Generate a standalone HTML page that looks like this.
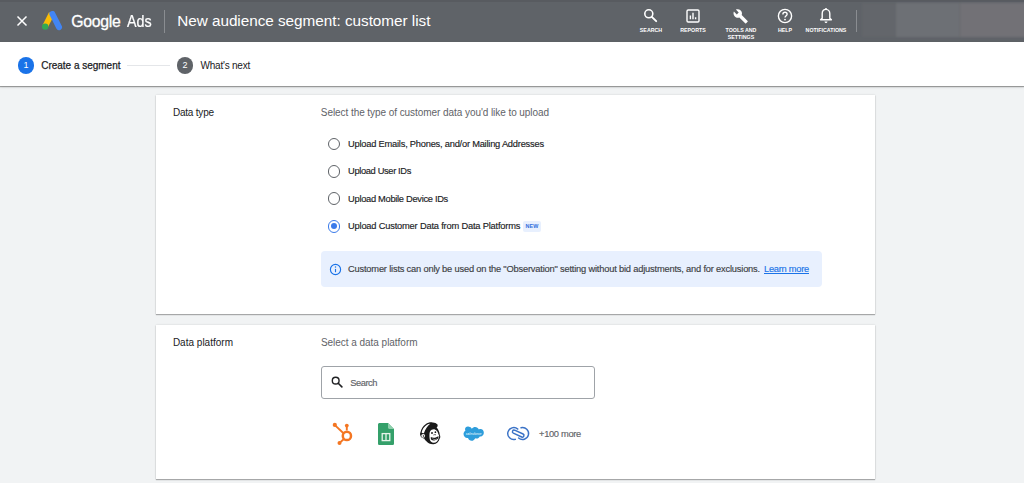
<!DOCTYPE html>
<html lang="en">
<head>
<meta charset="utf-8">
<title>New audience segment: customer list</title>
<style>
html,body{margin:0;padding:0;}
body{width:1024px;height:483px;overflow:hidden;background:#f1f3f4;position:relative;font-family:"Liberation Sans",sans-serif;color:#202124;}
.abs{position:absolute;white-space:nowrap;}
#hdr{position:absolute;left:0;top:0;width:1024px;height:42.4px;background:#5f6368;}
#hdr .topline{position:absolute;left:0;top:0;width:1024px;height:1.6px;background:#585b60;}
#step{position:absolute;left:0;top:42.4px;width:1024px;height:43.8px;background:#fff;box-shadow:0 1px 1px rgba(0,0,0,.32),0 1px 3px rgba(0,0,0,.12);}
.card{position:absolute;left:156px;width:717.5px;border-left:1px solid #fff;background:#fff;box-shadow:0 1px 1px rgba(0,0,0,.28),0 0 2px rgba(0,0,0,.14);}
.t11{font-size:11px;line-height:14px;}
.lbl{font-size:9.3px;line-height:12px;color:#202124;-webkit-text-stroke:0.15px currentColor;}
.nav{font-size:5.3px;line-height:7px;color:#fff;text-align:center;font-weight:bold;letter-spacing:0;}
.radio{position:absolute;width:10.6px;height:10.6px;border:1.5px solid #5f6368;border-radius:50%;background:#fff;}
</style>
</head>
<body>

<div id="hdr">
  <div class="topline"></div>
  <!-- close X -->
  <svg class="abs" style="left:16px;top:15px" width="12" height="12" viewBox="0 0 12 12"><path d="M1.5 1.5 L10.5 10.5 M10.5 1.5 L1.5 10.5" stroke="#fff" stroke-width="1.5" fill="none"/></svg>
  <!-- Google Ads logo -->
  <svg class="abs" style="left:41px;top:10.6px" width="23" height="21" viewBox="0 0 23 21">
    <path d="M10.6 2.6 L4.2 15.3" stroke="#fbbc04" stroke-width="5.8" stroke-linecap="butt" fill="none"/>
    <path d="M11.4 3 L18 16.2" stroke="#4285f4" stroke-width="6" stroke-linecap="round" fill="none"/>
    <circle cx="4.2" cy="15.6" r="3.2" fill="#34a853"/>
  </svg>
  <div id="tG" class="abs" style="left:71.3px;top:11px;font-size:15.8px;line-height:22px;color:#fff;-webkit-text-stroke:0.3px #fff;letter-spacing:-0.292px;">Google</div>
  <div id="tA" class="abs" style="left:126.6px;top:10px;font-size:16.2px;line-height:22px;color:#fff;transform:scaleX(0.885);transform-origin:0 0;-webkit-text-stroke:0.2px #fff;">Ads</div>
  <div class="abs" style="left:164px;top:10px;width:1px;height:23px;background:#8a8d91;"></div>
  <div id="tT" class="abs" style="left:177.2px;top:10px;font-size:15.3px;line-height:22px;color:#fff;letter-spacing:-0.029px;">New audience segment: customer list</div>

  <!-- nav icons -->
  <svg class="abs" style="left:643px;top:8px" width="15" height="15" viewBox="0 0 15 15"><circle cx="5.8" cy="5.8" r="4" stroke="#fff" stroke-width="1.6" fill="none"/><path d="M8.8 8.8 L13.2 13.2" stroke="#fff" stroke-width="1.9" stroke-linecap="round"/></svg>
  <div class="abs nav" style="left:630px;top:27px;width:42px;">SEARCH</div>

  <svg class="abs" style="left:686px;top:9px" width="14" height="14" viewBox="0 0 14 14"><rect x="1" y="1" width="12" height="12" rx="1.2" stroke="#fff" stroke-width="1.4" fill="none"/><path d="M4.4 10.2 V6.6 M7 10.2 V3.8 M9.6 10.2 V8.2" stroke="#fff" stroke-width="1.4"/></svg>
  <div class="abs nav" style="left:672px;top:27px;width:42px;">REPORTS</div>

  <svg class="abs" style="left:733px;top:8px" width="16" height="16" viewBox="0 0 16 16"><path d="M14.6 12.9 L8.7 7 C9.3 5.5 9 3.7 7.7 2.5 C6.4 1.2 4.5 0.9 2.9 1.6 L5.7 4.4 L3.8 6.4 L0.9 3.6 C0.1 5.2 0.5 7.1 1.8 8.4 C3 9.7 4.8 10 6.3 9.4 L12.2 15.3 C12.5 15.6 12.9 15.6 13.1 15.3 L14.6 13.8 C14.9 13.6 14.9 13.1 14.6 12.9 Z" fill="#fff"/></svg>
  <div class="abs nav" style="left:716px;top:27px;width:50px;">TOOLS AND<br>SETTINGS</div>

  <svg class="abs" style="left:777px;top:8px" width="16" height="16" viewBox="0 0 16 16"><circle cx="8" cy="8" r="6.6" stroke="#fff" stroke-width="1.4" fill="none"/><path d="M5.9 6.4 C5.9 5.1 6.8 4.3 8 4.3 C9.2 4.3 10.1 5.1 10.1 6.2 C10.1 7.6 8 7.8 8 9.5" stroke="#fff" stroke-width="1.4" fill="none"/><circle cx="8" cy="11.6" r="0.9" fill="#fff"/></svg>
  <div class="abs nav" style="left:764px;top:27px;width:42px;">HELP</div>

  <svg class="abs" style="left:818px;top:7px" width="16" height="17" viewBox="0 0 16 17"><path d="M8 2.4 C5.6 2.4 4.2 4.3 4.2 6.8 V11.2 L2.6 12.8 H13.4 L11.8 11.2 V6.8 C11.8 4.3 10.4 2.4 8 2.4 Z" stroke="#fff" stroke-width="1.4" fill="none" stroke-linejoin="round"/><circle cx="8" cy="1.9" r="1" fill="#fff"/><path d="M6.5 14.4 H9.5 C9.5 15.3 8.8 15.9 8 15.9 C7.2 15.9 6.5 15.3 6.5 14.4 Z" fill="#fff"/></svg>
  <div class="abs nav" style="left:796px;top:27px;width:60px;">NOTIFICATIONS</div>

  <div class="abs" style="left:856px;top:10px;width:1px;height:22px;background:#8a8d91;"></div>
  <!-- blurred account area -->
  <div class="abs" style="left:862px;top:3px;width:170px;height:34px;background:#63666b;filter:blur(0.8px);"></div>
  <div class="abs" style="left:896px;top:3px;width:64px;height:34px;background:#6d7075;filter:blur(0.8px);"></div>
  <div class="abs" style="left:960px;top:3px;width:72px;height:34px;background:#727176;filter:blur(0.8px);"></div>
</div>

<div id="step">
  <div class="abs" style="left:17.8px;top:14.6px;width:16.6px;height:16.6px;border-radius:50%;background:#1a73e8;color:#fff;font-size:9px;line-height:16.6px;text-align:center;">1</div>
  <div id="tS1" class="abs t11" style="left:41.2px;top:17px;color:#202124;font-size:10px;-webkit-text-stroke:0.25px #202124;letter-spacing:-0.013px;">Create a segment</div>
  <div class="abs" style="left:127px;top:22.4px;width:43px;height:1px;background:#e4e6e9;"></div>
  <div class="abs" style="left:176.8px;top:14.6px;width:16.6px;height:16.6px;border-radius:50%;background:#5f6368;color:#fff;font-size:9px;line-height:16.6px;text-align:center;">2</div>
  <div id="tS2" class="abs t11" style="left:200.5px;top:17px;color:#202124;font-size:10px;letter-spacing:-0.222px;">What's next</div>
</div>

<!-- Card 1 -->
<div class="card" style="top:95px;height:219px;">
  <div id="tL1" class="abs t11" style="left:15.9px;top:11px;color:#202124;font-size:10px;letter-spacing:-0.201px;">Data type</div>
  <div id="tD1" class="abs t11" style="left:163.8px;top:11px;color:#5f6368;font-size:10px;letter-spacing:-0.062px;">Select the type of customer data you'd like to upload</div>

  <div class="radio" style="left:170.8px;top:42.9px;"></div>
  <div id="tR1" class="abs lbl" style="left:191.1px;top:43px;letter-spacing:-0.223px;">Upload Emails, Phones, and/or Mailing Addresses</div>
  <div class="radio" style="left:170.8px;top:70.3px;"></div>
  <div id="tR2" class="abs lbl" style="left:191.1px;top:70px;letter-spacing:-0.354px;">Upload User IDs</div>
  <div class="radio" style="left:170.8px;top:97.4px;"></div>
  <div id="tR3" class="abs lbl" style="left:191.1px;top:98px;letter-spacing:-0.295px;">Upload Mobile Device IDs</div>
  <div class="radio" style="left:170.8px;top:125px;border-color:#3b7bea;"><div style="position:absolute;left:2.1px;top:2.1px;width:6.4px;height:6.4px;border-radius:50%;background:#3b7bea;"></div></div>
  <div id="tR4" class="abs lbl" style="left:191.0px;top:125px;letter-spacing:-0.190px;">Upload Customer Data from Data Platforms</div>
  <div class="abs" style="left:365.7px;top:126.4px;width:18.8px;height:10.9px;background:#e8f0fe;border-radius:2px;color:#2f6fdc;font-size:5.4px;line-height:10.9px;text-align:center;font-weight:bold;letter-spacing:.2px;">NEW</div>

  <div class="abs" style="left:163.6px;top:156.3px;width:501.6px;height:35.7px;background:#e8f0fe;border-radius:4px;"></div>
  <svg class="abs" style="left:171.8px;top:167.7px" width="13" height="13" viewBox="0 0 13 13"><circle cx="6.5" cy="6.5" r="5.1" stroke="#1a73e8" stroke-width="1.15" fill="none"/><path d="M6.5 5.9 V9.2" stroke="#1a73e8" stroke-width="1.15"/><circle cx="6.5" cy="4.1" r="0.75" fill="#1a73e8"/></svg>
  <div id="tI" class="abs lbl" style="left:191.0px;top:168px;color:#3c4043;letter-spacing:-0.190px;">Customer lists can only be used on the "Observation" setting without bid adjustments, and for exclusions.</div>
  <div id="tLM" class="abs lbl" style="left:607.0px;top:168px;color:#1a73e8;text-decoration:underline;letter-spacing:-0.255px;">Learn more</div>
</div>

<!-- Card 2 -->
<div class="card" style="top:325px;height:154px;">
  <div id="tL2" class="abs t11" style="left:15.9px;top:11px;color:#202124;font-size:10px;letter-spacing:0.005px;">Data platform</div>
  <div id="tD2" class="abs t11" style="left:163.9px;top:11px;color:#5f6368;font-size:10px;letter-spacing:-0.031px;">Select a data platform</div>

  <div class="abs" style="left:163.5px;top:41px;width:272.5px;height:31.4px;border:1px solid #9fa3a8;border-radius:3px;background:#fff;"></div>
  <svg class="abs" style="left:174.4px;top:51.4px" width="12.2" height="12.2" viewBox="0 0 13 13"><circle cx="5" cy="5" r="3.6" stroke="#202124" stroke-width="1.5" fill="none"/><path d="M7.7 7.7 L11.6 11.6" stroke="#202124" stroke-width="1.7" stroke-linecap="round"/></svg>
  <div id="tSe" class="abs lbl" style="left:193.2px;top:52px;color:#5f6368;letter-spacing:-0.428px;">Search</div>

  <!-- HubSpot -->
  <svg class="abs" style="left:174px;top:96px" width="24" height="26" viewBox="0 0 24 26">
    <circle cx="15.9" cy="14.9" r="4.1" stroke="#f47622" stroke-width="2.5" fill="none"/>
    <path d="M15.8 9.4 V5" stroke="#f47622" stroke-width="1.9"/>
    <circle cx="15.8" cy="4.6" r="1.9" fill="#f47622"/>
    <path d="M12.2 12 L4.4 4.6" stroke="#f47622" stroke-width="1.9"/>
    <circle cx="3.8" cy="3.9" r="2.1" fill="#f47622"/>
    <path d="M12.6 18.2 L9 21.6" stroke="#f47622" stroke-width="1.9"/>
    <circle cx="8.5" cy="22" r="2" fill="#f47622"/>
  </svg>
  <!-- Sheets -->
  <svg class="abs" style="left:220px;top:97px" width="18" height="24" viewBox="0 0 18 24">
    <path d="M2 1 H11 L17 7 V21.4 C17 22.3 16.3 23 15.4 23 H2.6 C1.7 23 1 22.3 1 21.4 V2.6 C1 1.7 1.7 1 2.6 1 Z" fill="#34a06a"/>
    <path d="M11 1 L17 7 H12.4 C11.6 7 11 6.4 11 5.6 Z" fill="#8fd0ad"/>
    <rect x="5.2" y="11.6" width="7.6" height="7" fill="none" stroke="#e6f4ea" stroke-width="1.3"/>
    <path d="M9 11.6 V18.6" stroke="#e6f4ea" stroke-width="1.3"/>
  </svg>
  <!-- Mailchimp -->
  <svg class="abs" style="left:261px;top:96px" width="25" height="25" viewBox="0 0 25 25">
    <path d="M2.4 14.6 C1.9 13.4 2 12.2 2.5 11.2 C3 8 5 5 7.6 3.2 C9.6 1.8 12 1.2 14.4 1.4 C16.4 1.3 18.4 2 19.5 3.4 C20 4.6 19.4 5.8 18.6 6.6 C20.4 8.6 21.6 11.2 21.8 14 C22.6 15.2 22.4 16.8 21.6 17.8 C21 20.8 18.6 23 15.6 23.2 C12.6 23.4 10 22.2 8.4 20.2 C7.4 19.4 6.6 18.4 6.2 17.4 C4.4 17.6 2.8 16.4 2.4 14.6 Z" fill="#1a1a1a"/>
    <path d="M3.6 11.6 C4.2 8.4 6.4 5.4 9 3.8 C10 3.2 11.2 2.8 12.2 2.8 C9.6 4.8 7.2 8.2 6 12 C5.2 12.4 4.2 12.2 3.6 11.6 Z" fill="#fff"/>
    <circle cx="5.2" cy="14.8" r="1.9" fill="#fff"/>
    <circle cx="5.5" cy="14.9" r="0.75" fill="#1a1a1a"/>
    <path d="M12 10.4 C13 8.8 15 8 16.8 8.4 C18.8 9 20 11 20.4 13.2 C21.4 14.2 21.4 16 20.6 17 C20.2 19.8 18.2 21.8 15.8 21.8 C13.4 21.8 11.8 20 11.6 17.6 C11.4 15 11.2 12.4 12 10.4 Z" fill="#fff"/>
    <path d="M12.8 16 C14.8 17.4 18.4 17 20.4 15 C20.6 16 20.4 17 20 17.6 C18.4 19.6 15 20 13 18.4 C12.8 17.6 12.7 16.8 12.8 16 Z" fill="#1a1a1a"/>
    <path d="M13.8 17.6 C15.4 18.4 17.8 18.2 19.4 17.2 C18.2 18.8 15.4 19.2 13.8 17.6 Z" fill="#fff"/>
    <circle cx="14" cy="12" r="0.95" fill="#1a1a1a"/>
    <circle cx="17.4" cy="11.2" r="0.85" fill="#1a1a1a"/>
    <path d="M15.4 14 C16.2 13.6 17.2 13.5 18 13.8" stroke="#1a1a1a" stroke-width="0.7" fill="none"/>
  </svg>
  <!-- Salesforce -->
  <svg class="abs" style="left:306.3px;top:99.6px" width="21.2" height="16.7" viewBox="0 0 24 18" preserveAspectRatio="none">
    <path d="M10 2.6 C11 1.4 12.4 0.8 13.8 0.8 C15.6 0.8 17.2 1.8 18 3.4 C18.6 3.1 19.2 3 19.8 3 C22 3 23.6 4.8 23.6 7 C23.6 9.2 22 11 19.8 11 C19.5 11 19.2 11 19 10.9 C18.4 12.2 17 13.2 15.4 13.2 C14.8 13.2 14.2 13.1 13.8 12.8 C13.1 14.4 11.6 15.6 9.8 15.6 C7.9 15.6 6.3 14.4 5.7 12.6 C5.4 12.7 5.1 12.7 4.8 12.7 C2.5 12.7 0.6 10.8 0.6 8.4 C0.6 6.8 1.4 5.4 2.7 4.7 C2.4 4.1 2.3 3.5 2.3 2.9 C2.3 1.3 4.4 -0.6 6.8 0.4 C8.2 0.4 9.3 1.4 10 2.6 Z" fill="#2d9ddb" transform="translate(0,1.4)"/>
    <text x="12" y="10.6" font-family="Liberation Sans, sans-serif" font-size="3.6" font-style="italic" font-weight="bold" fill="#d7ecf8" text-anchor="middle">salesforce</text>
  </svg>
  <!-- Zoho CRM -->
  <svg class="abs" style="left:349px;top:101px" width="25" height="16" viewBox="0 0 25 16">
    <g stroke="#3a72c6" stroke-width="1.45" fill="none" stroke-linecap="round">
      <path d="M9.30 13.35 A6 6 0 1 1 11.76 3.09"/>
      <path d="M15.05 1.75 A6 6 0 1 1 12.59 12.01"/>
      <path d="M8.68 4.20 L17.08 8.00 A1.65 1.65 0 0 1 15.72 11.00 L7.32 7.20 A1.65 1.65 0 0 1 8.68 4.20 Z"/>
    </g>
  </svg>
  <div id="tM" class="abs lbl" style="left:382.0px;top:103px;color:#5f6368;letter-spacing:-0.302px;">+100 more</div>
</div>

</body>
</html>
